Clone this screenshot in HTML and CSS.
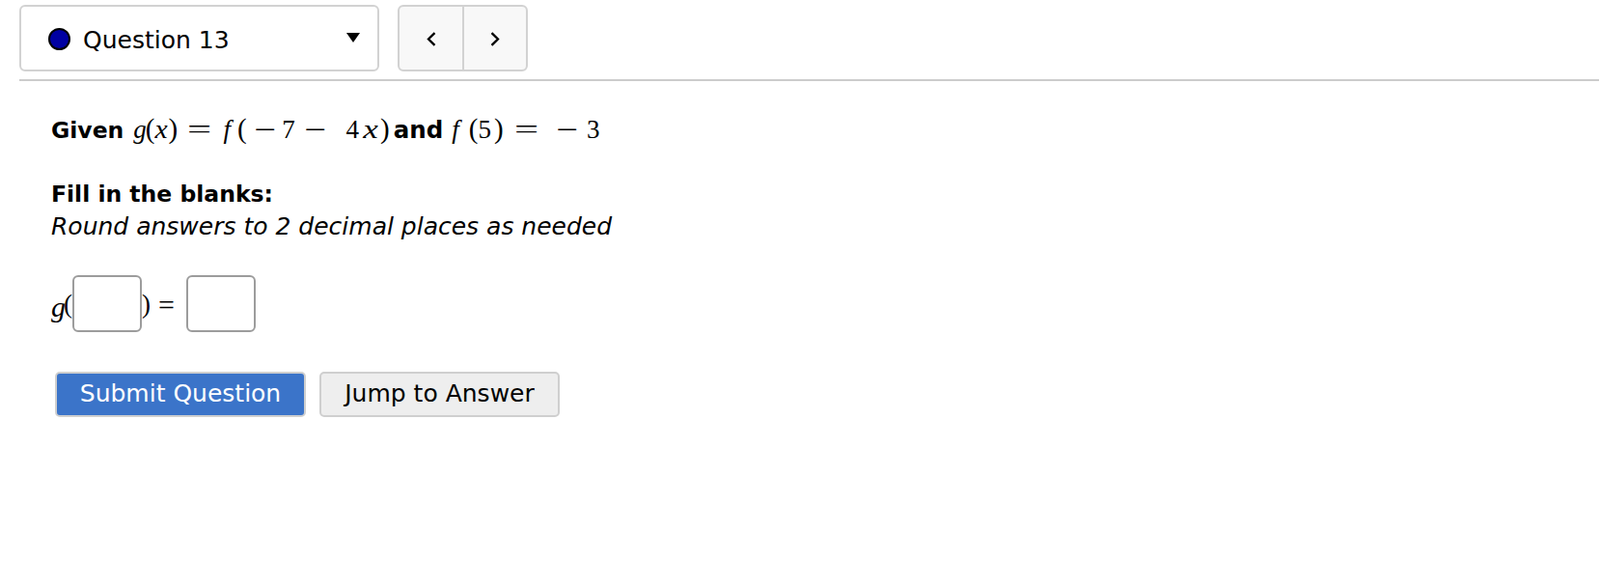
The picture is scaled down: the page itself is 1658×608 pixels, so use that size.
FILE: index.html
```html
<!DOCTYPE html>
<html>
<head>
<meta charset="utf-8">
<title>Question 13</title>
<link rel="stylesheet" href="styles.css">
</head>
<body>
<div class="topbar">
  <div class="select">
    <span class="dot"></span>
    <span class="qlabel">Question 13</span>
    <span class="caret"></span>
  </div>
  <div class="nav">
    <span class="navbtn left"><svg width="10" height="15" viewBox="0 0 10 15"><polyline points="8.5,1.2 2,7.5 8.5,13.8" fill="none" stroke="#000" stroke-width="2.3"/></svg></span>
    <span class="navdiv"></span>
    <span class="navbtn right"><svg width="10" height="15" viewBox="0 0 10 15"><polyline points="1.5,1.2 8,7.5 1.5,13.8" fill="none" stroke="#000" stroke-width="2.3"/></svg></span>
  </div>
</div>
<div class="rule"></div>
<div class="question">
  <p class="given"><b class="bw">Given</b><span class="math m1"><i class="mi g1">g</i><span class="mp">(</span><i class="mi x1">x</i><span class="mp">)</span><span class="rel r1">=</span><i class="mi f1">f</i><span class="mp">(</span><span class="bin b1">−</span><span class="mn n7">7</span><span class="bin b2">−</span><span class="mn">4</span><i class="mi x2">x</i><span class="mp">)</span></span><b class="bw and">and</b><span class="math m2"><i class="mi f2">f</i><span class="mp">(</span><span class="mn n5">5</span><span class="mp p5">)</span><span class="rel r2">=</span><span class="bin b3">−</span><span class="mn">3</span></span></p>
  <p class="fill"><b>Fill in the blanks:</b><br><i class="hint">Round answers to 2 decimal places as needed</i></p>
  <div class="answer">
    <i class="ag">g</i><span class="ap">(</span><span class="box"></span><span class="ap">)</span><span class="aeq">=</span><span class="box"></span>
  </div>
  <div class="buttons">
    <button class="btn primary">Submit Question</button>
    <button class="btn secondary">Jump to Answer</button>
  </div>
</div>
</body>
</html>
```
FILE: styles.css
```css
body {
  margin: 0;
  background: #fff;
  color: #000;
  font-family: "DejaVu Sans", "Liberation Sans", sans-serif;
}

.topbar {
  display: flex;
  gap: 19px;
  padding: 5px 0 0 20px;
}

.select {
  width: 373px;
  height: 69px;
  box-sizing: border-box;
  border: 2px solid #d2d2d2;
  border-radius: 6px;
  display: flex;
  align-items: center;
  padding: 0 18px 0 28px;
}

.dot {
  width: 23px;
  height: 23px;
  box-sizing: border-box;
  border: 2px solid #000;
  border-radius: 50%;
  background: #0000a2;
  margin: 2px 13px 0 0;
}

.qlabel {
  flex: 1;
  font-size: 25px;
  padding-top: 4px;
}

.caret {
  width: 0;
  height: 0;
  border-left: 7.5px solid transparent;
  border-right: 7.5px solid transparent;
  border-top: 10px solid #000;
  margin-top: -2px;
}

.nav {
  width: 135px;
  height: 69px;
  box-sizing: border-box;
  border: 2px solid #d2d2d2;
  border-radius: 6px;
  background: #f8f8f8;
  display: flex;
}

.navbtn {
  flex: 1;
  display: flex;
  align-items: center;
  justify-content: center;
}

.navbtn svg {
  display: block;
  margin-top: 2px;
}

.navbtn.left {
  padding-left: 1px;
}

.navdiv {
  width: 2px;
  background: #d2d2d2;
}

.rule {
  height: 2px;
  background: #cccccc;
  margin: 8px 1px 0 20px;
}

.question {
  padding-left: 53px;
}

.given {
  margin: 29px 0 0 0;
  line-height: 40px;
  font-size: 23.5px;
  white-space: nowrap;
}

.bw {
  font-weight: bold;
}

.math {
  font-family: "Liberation Serif", "Times New Roman", serif;
  font-size: 27px;
}

.m1 {
  margin-left: 10px;
}

.m2 {
  margin-left: 9px;
}

.and {
  margin-left: 4px;
  font-size: 24.5px;
}

.mi {
  font-style: italic;
}

.mp {
  font-size: 29px;
}

.g1 {
  margin-right: -1px;
}

.x1 {
  display: inline-block;
  transform: scaleX(1.1);
  margin-right: 2px;
}

.x2 {
  display: inline-block;
  transform: scaleX(1.3);
  margin: 0 4px 0 6px;
}

.f1 {
  margin-right: 7px;
}

.f2 {
  margin-right: 10px;
}

.rel {
  display: inline-block;
  transform: scaleX(1.65);
}

.r1 {
  margin: 0 17px 0 15px;
}

.r2 {
  margin: 0 27px 0 16px;
}

.bin {
  display: inline-block;
  transform: scaleX(1.5);
}

.b1 {
  margin: 0 10.5px 0 11px;
}

.b2 {
  margin: 0 24px 0 13.5px;
}

.b3 {
  margin: 0 13px 0 0;
}

.n5 {
  margin-left: 0;
}

.p5 {
  margin-left: 3px;
}

.fill {
  margin: 30px 0 0 0;
  font-size: 23.5px;
  line-height: 33px;
}

.hint {
  font-size: 25px;
}

.answer {
  display: flex;
  align-items: center;
  margin-top: 33px;
  height: 59px;
}

.ag {
  font-family: "Liberation Serif", "Times New Roman", serif;
  font-size: 30px;
  margin: 6px -2px 0 0;
}

.ap {
  font-family: "Liberation Serif", "Times New Roman", serif;
  font-size: 27px;
  margin-top: 2px;
}

.box {
  width: 72px;
  height: 59px;
  box-sizing: border-box;
  border: 2px solid #9c9c9c;
  border-radius: 6px;
  background: #fff;
}

.aeq {
  font-family: "Liberation Serif", "Times New Roman", serif;
  font-size: 30px;
  margin: 2px 12px 0 8px;
}

.buttons {
  display: flex;
  gap: 14px;
  margin-top: 41px;
  padding-left: 4px;
}

.btn {
  height: 47px;
  box-sizing: border-box;
  border: 2px solid #cfcfcf;
  border-radius: 5px;
  font-family: "DejaVu Sans", sans-serif;
  font-size: 25px;
  padding: 0 0 2px 0;
  margin: 0;
}

.btn.primary {
  width: 260px;
  background: #3b74c9;
  color: #fff;
}

.btn.secondary {
  width: 249px;
  background: #eeeeee;
  color: #000;
}
```
